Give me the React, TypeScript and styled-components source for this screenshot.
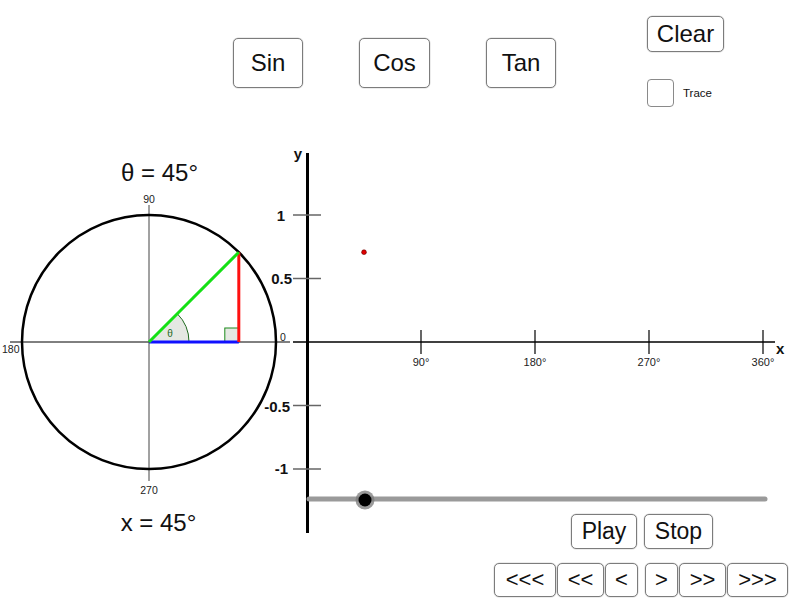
import React from "react";
import styled, { createGlobalStyle } from "styled-components";

const GlobalStyle = createGlobalStyle`
  html, body { margin: 0; padding: 0; background: #ffffff; }
  body { font-family: "Liberation Sans", Arial, sans-serif; }
`;

const Stage = styled.div`
  position: relative;
  width: 800px;
  height: 600px;
  overflow: hidden;
  background: #ffffff;
`;

const Canvas = styled.svg`
  display: block;
  width: 800px;
  height: 600px;
  font-family: "Liberation Sans", Arial, sans-serif;
`;

const Overlay = styled.div<{ $left: number; $top: number }>`
  position: absolute;
  left: ${(p) => p.$left}px;
  top: ${(p) => p.$top}px;
  display: flex;
  align-items: center;
`;

const FnRow = styled(Overlay)`
  gap: 56px;
`;

const SideColumn = styled(Overlay)`
  flex-direction: column;
  align-items: flex-start;
  gap: 27px;
`;

const PlayRow = styled(Overlay)`
  gap: 7px;
`;

const StepRow = styled(Overlay)`
  gap: 7px;
`;

const StepGroup = styled.div`
  display: flex;
  gap: 1px;
`;

const GgbButton = styled.button<{ $w: number; $h: number; $fs: number }>`
  box-sizing: border-box;
  width: ${(p) => p.$w}px;
  height: ${(p) => p.$h}px;
  padding: 0;
  margin: 0;
  background: #ffffff;
  border: 1px solid #7c7c7c;
  border-radius: 5px;
  box-shadow: 0 0 0 0.5px rgba(0, 0, 0, 0.15);
  font-family: "Liberation Sans", Arial, sans-serif;
  font-size: ${(p) => p.$fs}px;
  color: #111111;
  display: flex;
  align-items: center;
  justify-content: center;
  cursor: pointer;
`;

const TraceLabel = styled.label`
  display: flex;
  align-items: center;
  gap: 9px;
  font-size: 11.5px;
  color: #111111;
`;

const CheckBox = styled.span`
  box-sizing: border-box;
  width: 27px;
  height: 28px;
  border: 1px solid #8a8a8a;
  border-radius: 4px;
  background: #ffffff;
`;

const R = 127;
const CX = 149;
const CY = 342;
const PX = CX + R * Math.cos(Math.PI / 4);
const PY = CY - R * Math.sin(Math.PI / 4);
const AR = 40;

const xTicks = [
  { x: 421, label: "90°" },
  { x: 535, label: "180°" },
  { x: 649, label: "270°" },
  { x: 763, label: "360°" },
];

const yTicks = [
  { y: 215, label: "1", end: 285, base: 221 },
  { y: 278.5, label: "0.5", end: 292, base: 284 },
  { y: 405.5, label: "-0.5", end: 290, base: 411.5 },
  { y: 469, label: "-1", end: 288, base: 474 },
];

export default function App() {
  return (
    <>
      <GlobalStyle />
      <Stage>
        <Canvas viewBox="0 0 800 600" xmlns="http://www.w3.org/2000/svg">
          {/* unit circle */}
          <line x1={10} y1={CY} x2={290} y2={CY} stroke="#000" strokeWidth={1} />
          <line x1={CX} y1={205} x2={CX} y2={481} stroke="#444" strokeWidth={1} />
          <circle cx={CX} cy={CY} r={R} fill="none" stroke="#000" strokeWidth={2.5} />
          <text x={CX} y={203} fontSize={10.5} textAnchor="middle" fill="#222">90</text>
          <text x={CX} y={494} fontSize={10.5} textAnchor="middle" fill="#222">270</text>
          <text x={2} y={353} fontSize={10.5} fill="#222">180</text>
          <text x={280} y={341} fontSize={10.5} fill="#222">0</text>

          <path
            d={`M${CX},${CY} L${CX + AR},${CY} A${AR},${AR} 0 0,0 ${CX + AR * Math.cos(Math.PI / 4)},${CY - AR * Math.sin(Math.PI / 4)} Z`}
            fill="#e5e8e3"
            stroke="none"
          />
          <path
            d={`M${CX + AR},${CY} A${AR},${AR} 0 0,0 ${CX + AR * Math.cos(Math.PI / 4)},${CY - AR * Math.sin(Math.PI / 4)}`}
            fill="none"
            stroke="#1f6a1f"
            strokeWidth={1}
          />
          <text x={170} y={337} fontSize={10} textAnchor="middle" fill="#1f6a1f">θ</text>
          <rect x={PX - 14} y={CY - 14} width={14} height={14} fill="#e5e8e3" stroke="#1a8a1a" strokeWidth={1} />

          <line x1={CX} y1={CY} x2={PX} y2={CY} stroke="#1010ff" strokeWidth={3} />
          <line x1={PX} y1={PY} x2={PX} y2={CY} stroke="#ff1010" strokeWidth={3} />
          <line x1={CX} y1={CY} x2={PX} y2={PY} stroke="#14e014" strokeWidth={3} />

          <text x={159.5} y={181} fontSize={24} textAnchor="middle" fill="#111">θ = 45°</text>
          <text x={158.5} y={531} fontSize={24} textAnchor="middle" fill="#111">x = 45°</text>

          {/* graph axes */}
          <line x1={293} y1={CY} x2={775} y2={CY} stroke="#000" strokeWidth={1.5} />
          <line x1={307.5} y1={153} x2={307.5} y2={533} stroke="#000" strokeWidth={3} />
          {xTicks.map((t) => (
            <g key={t.label}>
              <line x1={t.x} y1={330} x2={t.x} y2={354} stroke="#000" strokeWidth={1.2} />
              <text x={t.x} y={366} fontSize={11} textAnchor="middle" fill="#222">{t.label}</text>
            </g>
          ))}
          {yTicks.map((t) => (
            <g key={t.label}>
              <line x1={293} y1={t.y} x2={321} y2={t.y} stroke="#666" strokeWidth={1.5} />
              <text x={t.end} y={t.base} fontSize={15} fontWeight="bold" textAnchor="end" fill="#111">{t.label}</text>
            </g>
          ))}
          <text x={298} y={159} fontSize={15} fontWeight="bold" textAnchor="middle" fill="#111">y</text>
          <text x={776} y={354} fontSize={15} fontWeight="bold" fill="#111">x</text>

          <circle cx={364} cy={PY} r={2.4} fill="#e00000" stroke="#600" strokeWidth={0.6} />

          {/* slider */}
          <line x1={309} y1={499} x2={765} y2={499} stroke="#9a9a9a" strokeWidth={5} strokeLinecap="round" />
          <circle cx={365} cy={500} r={9.5} fill="#7a7a7a" opacity={0.75} />
          <circle cx={365} cy={500} r={6.5} fill="#000" />
        </Canvas>

        <FnRow $left={233} $top={38}>
          <GgbButton $w={70} $h={50} $fs={24}>Sin</GgbButton>
          <GgbButton $w={71} $h={50} $fs={24}>Cos</GgbButton>
          <GgbButton $w={70} $h={50} $fs={24}>Tan</GgbButton>
        </FnRow>

        <SideColumn $left={647} $top={16}>
          <GgbButton $w={77} $h={36} $fs={24}>Clear</GgbButton>
          <TraceLabel>
            <CheckBox />
            Trace
          </TraceLabel>
        </SideColumn>

        <PlayRow $left={571} $top={514}>
          <GgbButton $w={66} $h={35} $fs={23}>Play</GgbButton>
          <GgbButton $w={69} $h={35} $fs={23}>Stop</GgbButton>
        </PlayRow>

        <StepRow $left={494} $top={563}>
          <StepGroup>
            <GgbButton $w={62} $h={34} $fs={22}>&lt;&lt;&lt;</GgbButton>
            <GgbButton $w={47} $h={34} $fs={22}>&lt;&lt;</GgbButton>
            <GgbButton $w={33} $h={34} $fs={22}>&lt;</GgbButton>
          </StepGroup>
          <StepGroup>
            <GgbButton $w={33} $h={34} $fs={22}>&gt;</GgbButton>
            <GgbButton $w={47} $h={34} $fs={22}>&gt;&gt;</GgbButton>
            <GgbButton $w={61} $h={34} $fs={22}>&gt;&gt;&gt;</GgbButton>
          </StepGroup>
        </StepRow>
      </Stage>
    </>
  );
}
